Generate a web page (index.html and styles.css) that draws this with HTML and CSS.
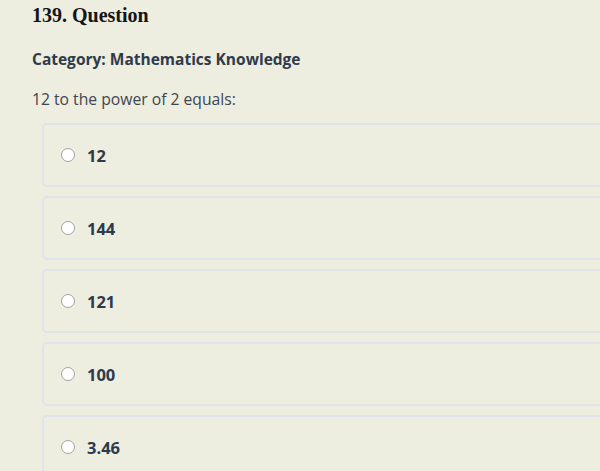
FILE: index.html
```html
<!DOCTYPE html>
<html>
<head>
<meta charset="utf-8">
<link rel="stylesheet" href="styles.css">
</head>
<body>
<div class="quiz">
  <h2 class="title">139. Question</h2>
  <p class="category">Category: Mathematics Knowledge</p>
  <p class="question">12 to the power of 2 equals:</p>
  <ul class="options">
    <li class="option"><span class="radio"></span><span class="label">12</span></li>
    <li class="option"><span class="radio"></span><span class="label">144</span></li>
    <li class="option"><span class="radio"></span><span class="label">121</span></li>
    <li class="option"><span class="radio"></span><span class="label">100</span></li>
    <li class="option"><span class="radio"></span><span class="label">3.46</span></li>
  </ul>
</div>
</body>
</html>
```
FILE: styles.css
```css
html, body {
  margin: 0;
  padding: 0;
  background: #edede0;
  overflow: hidden;
}
.quiz {
  padding: 4px 0 0 32px;
  width: 620px;
  font-family: "Open Sans", sans-serif;
}
.title {
  margin: 0;
  font-family: "Liberation Serif", serif;
  font-size: 20px;
  font-weight: bold;
  line-height: 22px;
  color: #151515;
}
.category {
  margin: 23px 0 0;
  font-size: 15.5px;
  font-weight: 700;
  line-height: 20px;
  color: #2f3b4b;
}
.question {
  margin: 20px 0 0;
  font-size: 15.7px;
  font-weight: 400;
  line-height: 20px;
  color: #3f4552;
}
.options {
  list-style: none;
  margin: 14px 0 0 10px;
  padding: 0;
  display: flex;
  flex-direction: column;
  gap: 9px;
}
.option {
  box-sizing: border-box;
  height: 64px;
  border: 2px solid #e0e3e9;
  border-radius: 5px;
  display: flex;
  align-items: center;
  padding-left: 17px;
}
.radio {
  box-sizing: border-box;
  width: 14px;
  height: 14px;
  border-radius: 50%;
  border: 1.5px solid #a2a2a2;
  background: #ffffff;
  flex: none;
}
.label {
  margin-left: 12px;
  font-size: 16.5px;
  font-weight: 700;
  color: #2b3a4c;
}
```
